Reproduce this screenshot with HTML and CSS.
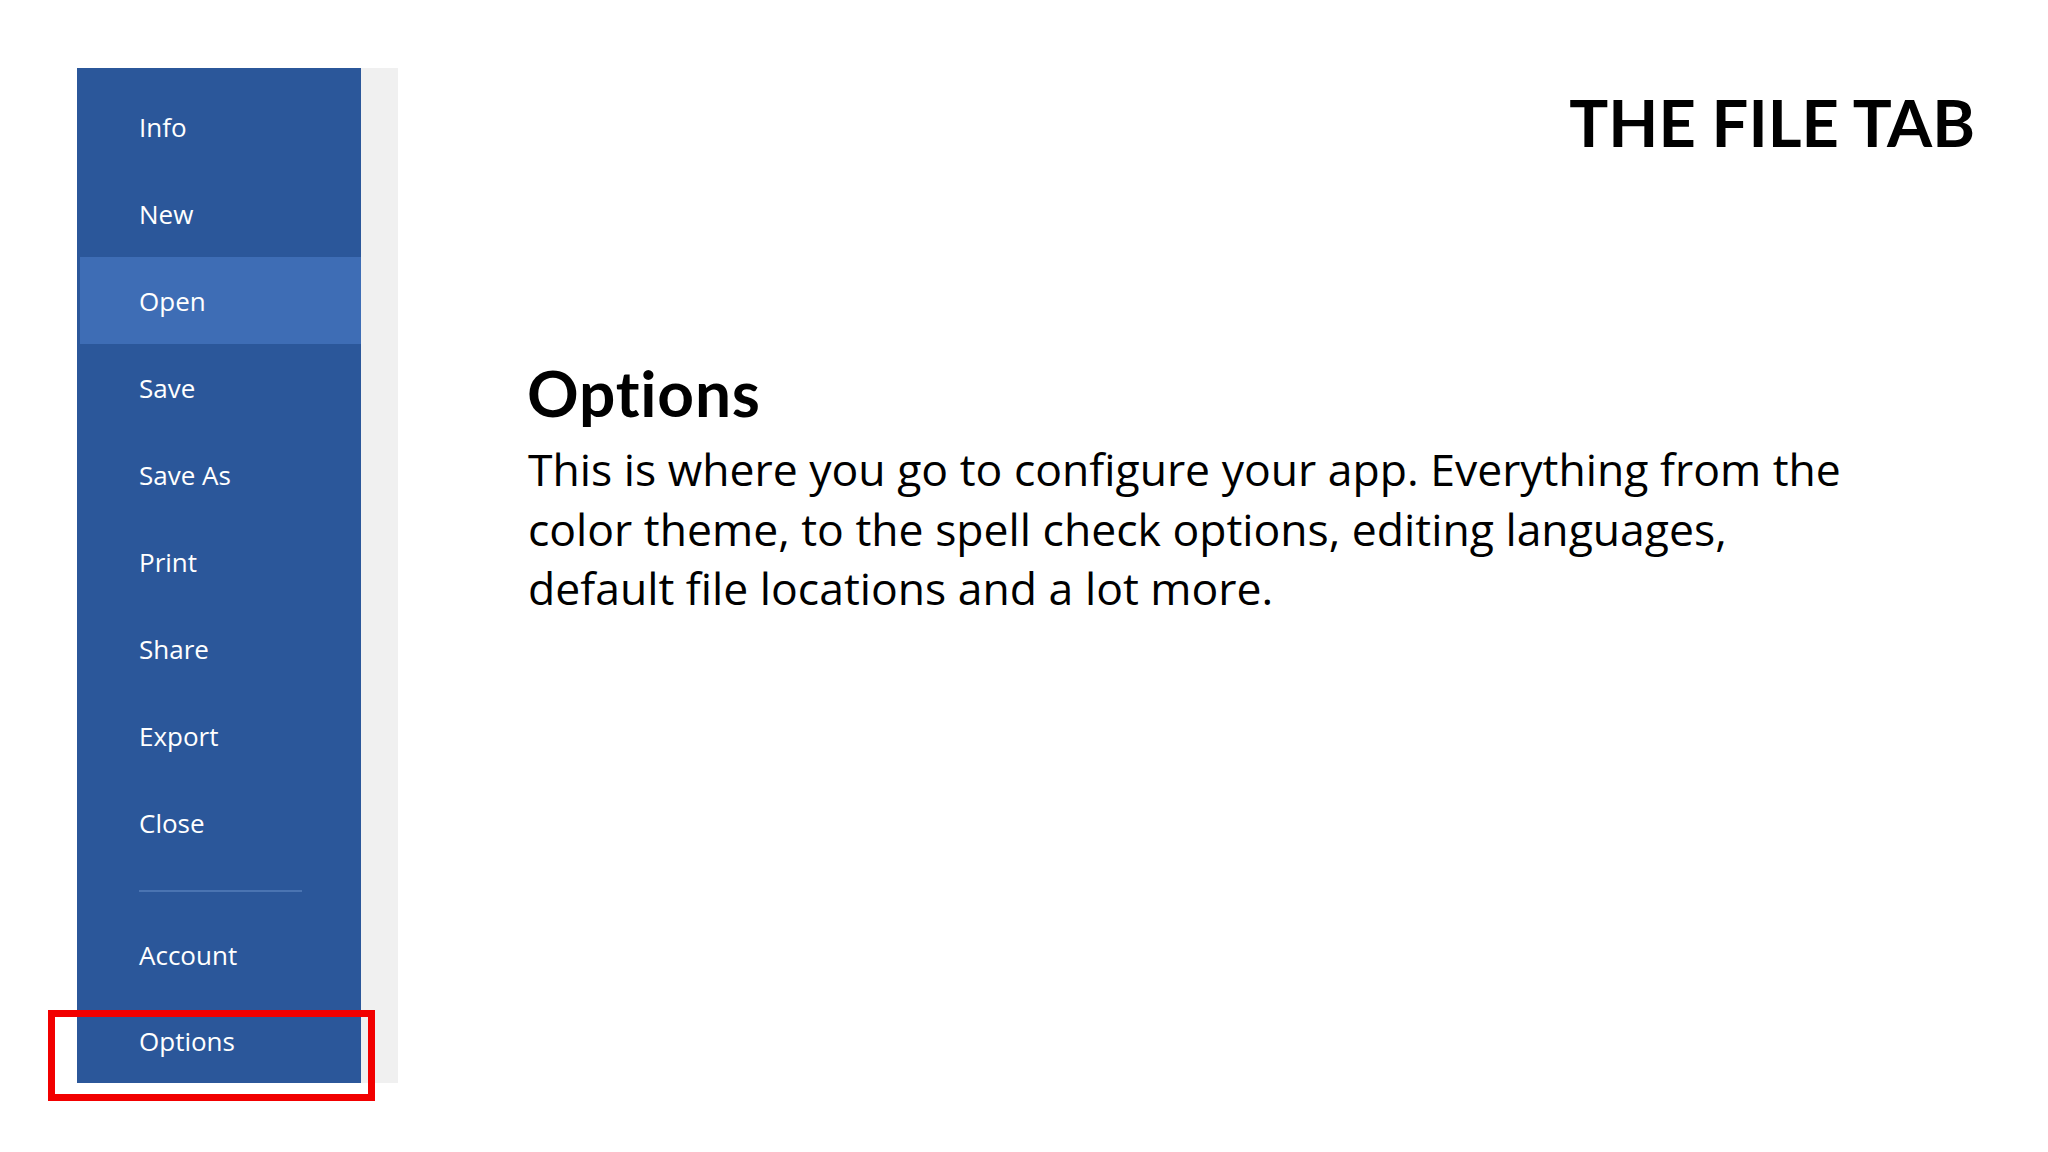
FILE: index.html
```html
<!DOCTYPE html>
<html lang="en">
<head>
<meta charset="utf-8">
<title>The File Tab</title>
<link rel="stylesheet" href="styles.css">
</head>
<body>
<div class="slide">
  <nav class="backstage">
    <div class="menu">
      <ul class="menu-list">
        <li class="menu-item">Info</li>
        <li class="menu-item">New</li>
        <li class="menu-item active">Open</li>
        <li class="menu-item">Save</li>
        <li class="menu-item">Save As</li>
        <li class="menu-item">Print</li>
        <li class="menu-item">Share</li>
        <li class="menu-item">Export</li>
        <li class="menu-item">Close</li>
      </ul>
      <div class="menu-sep"><span class="sep-line"></span></div>
      <ul class="menu-list bottom">
        <li class="menu-item">Account</li>
        <li class="menu-item last">Options</li>
      </ul>
      <div class="callout"></div>
    </div>
    <div class="strip"></div>
  </nav>
  <main class="content">
    <h1 class="title">THE FILE TAB</h1>
    <section class="topic">
      <h2 class="topic-head">Options</h2>
      <p class="topic-body">This is where you go to configure your app. Everything from the<br>color theme, to the spell check options, editing languages,<br>default file locations and a lot more.</p>
    </section>
  </main>
</div>
</body>
</html>
```

FILE: styles.css
```css
html, body {
  margin: 0;
  padding: 0;
  background: #ffffff;
}

.slide {
  width: 2048px;
  height: 1152px;
  display: flex;
  flex-direction: row;
  align-items: flex-start;
  overflow: hidden;
}

.backstage {
  display: flex;
  flex-direction: row;
  margin-left: 77px;
  margin-top: 68px;
  height: 1015px;
}

.menu {
  position: relative;
  width: 284px;
  height: 100%;
  background: #2b579a;
  padding-top: 15px;
  box-sizing: border-box;
  display: flex;
  flex-direction: column;
}

.menu-list {
  list-style: none;
  margin: 0;
  padding: 0;
  display: flex;
  flex-direction: column;
}

.menu-list.bottom {
  flex: 1;
}

.menu-item {
  height: 87px;
  line-height: 87px;
  padding-left: 62px;
  padding-top: 1px;
  box-sizing: border-box;
  font-family: "Open Sans", "Noto Sans", sans-serif;
  font-size: 26px;
  color: #ffffff;
}

.menu-list.bottom .menu-item {
  height: 86px;
  line-height: 86px;
}

.menu-item.active {
  background: #3e6db5;
  margin-left: 3px;
  padding-left: 59px;
}

.menu-sep {
  height: 48px;
  padding-left: 62px;
  padding-top: 24px;
  box-sizing: border-box;
}

.sep-line {
  display: block;
  width: 163px;
  height: 2px;
  background: #4a74b2;
}

.callout {
  position: absolute;
  left: -29px;
  top: 942px;
  width: 327px;
  height: 91px;
  border: 7px solid #f20000;
  box-sizing: border-box;
}

.strip {
  width: 37px;
  height: 100%;
  background: #f0f0f0;
}

.content {
  flex: 1;
  display: flex;
  flex-direction: column;
}

.title {
  margin: 0;
  padding-top: 82px;
  padding-right: 73px;
  text-align: right;
  font-family: "Lato", "Open Sans", sans-serif;
  font-weight: 700;
  font-size: 65px;
  line-height: 80px;
  color: #000000;
}

.topic {
  margin-left: 129px;
  margin-top: 196px;
}

.topic-head {
  margin: 0;
  font-family: "Lato", "Open Sans", sans-serif;
  font-weight: 700;
  font-size: 64px;
  letter-spacing: 0.8px;
  line-height: 70px;
  color: #000000;
}

.topic-body {
  margin: 11px 0 0 0;
  padding-left: 1px;
  font-family: "Open Sans", "Lato", sans-serif;
  font-weight: 400;
  font-size: 44.5px;
  line-height: 59.5px;
  font-variant-ligatures: none;
  color: #000000;
}
```
